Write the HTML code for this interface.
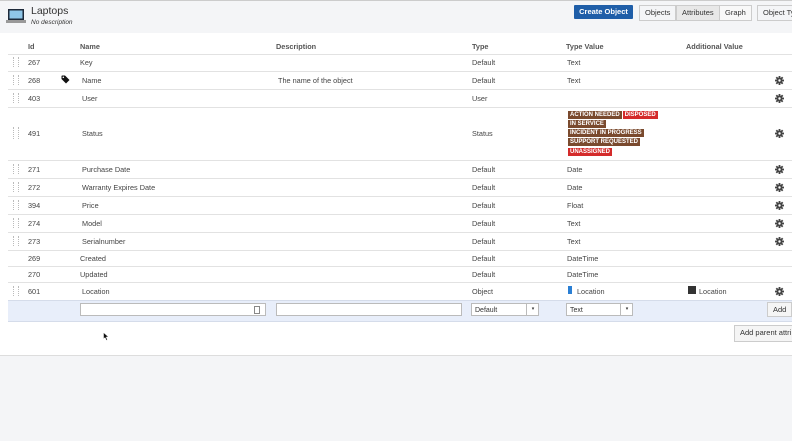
<!DOCTYPE html><html><head><style>
body{margin:0;width:792px;height:441px;overflow:hidden;background:#f4f5f7;font-family:"Liberation Sans",sans-serif;color:#333;position:relative}
.a{position:absolute;white-space:nowrap}
.hd{position:absolute;left:0;top:0;width:792px;height:32px;background:#f4f5f7;border-top:1px solid #ccc;border-bottom:1px solid #ccc}
.main{position:absolute;left:0;top:33px;width:792px;height:322px;background:#fff;border-bottom:1px solid #ddd}
.ln{position:absolute;left:8px;width:784px;height:1px;background:#e2e2e2}
.t{position:absolute;font-size:7.3px;color:#444;white-space:nowrap}
.th{position:absolute;font-size:7.3px;font-weight:bold;color:#555}
.dr{position:absolute;left:13px;width:4px;border-left:1px dotted #bbb;border-right:1px dotted #bbb}
.g{position:absolute;left:775px;width:9px;height:9px}
.lr{position:absolute;left:0;height:8px;white-space:nowrap}
.lz{display:inline-block;height:8px;font-size:6px;line-height:8.5px;font-weight:bold;color:#fff;padding:0 2px;margin-right:1px;vertical-align:top;overflow:hidden}
.br{background:#7a4a2e}.rd{background:#d42b2b}
.btn{position:absolute;font-size:7.5px;border:1px solid #ccc;background:#f4f5f7;height:14px;line-height:14px;padding:0 5px;color:#333}
.inp{position:absolute;height:13px;background:#fff;border:1px solid #bbb;font-size:7px;line-height:13px;padding-left:3px;box-sizing:border-box}
</style></head><body>
<svg width="0" height="0" style="position:absolute"><defs><g id="gear"><circle cx="4.5" cy="4.5" r="3" fill="#444"/><g stroke="#444" stroke-width="1.8"><line x1="4.5" y1="0" x2="4.5" y2="9"/><line x1="0" y1="4.5" x2="9" y2="4.5"/><line x1="1.3" y1="1.3" x2="7.7" y2="7.7"/><line x1="7.7" y1="1.3" x2="1.3" y2="7.7"/></g><circle cx="4.5" cy="4.5" r="1.2" fill="#fff"/></g></defs></svg>
<div class="hd"></div>
<svg class="a" style="left:6px;top:8px" width="20" height="16"><rect x="2" y="1" width="16" height="11" fill="#1e2a3a"/><rect x="3.5" y="2.5" width="13" height="8" fill="#8fc6e8"/><rect x="0" y="12" width="20" height="3" fill="#999"/></svg>
<div class="a" style="left:31px;top:5px;font-size:10.5px;color:#333">Laptops</div>
<div class="a" style="left:31px;top:19px;font-size:6.5px;font-style:italic;color:#333">No description</div>
<div class="a" style="left:574px;top:5px;width:59px;height:14px;background:#1f5ea8;color:#fff;font-size:7.5px;font-weight:bold;text-align:center;line-height:14px;border-radius:1px">Create Object</div>
<div class="btn" style="left:639px;top:5px">Objects</div>
<div class="btn" style="left:676px;top:5px;background:#e8e8e8">Attributes</div>
<div class="btn" style="left:719px;top:5px;background:#f8f8f8">Graph</div>
<div class="btn" style="left:757px;top:5px;width:40px">Object Ty</div>
<div class="main"></div>
<div class="th" style="left:28px;top:42px">Id</div><div class="th" style="left:80px;top:42px">Name</div><div class="th" style="left:276px;top:42px">Description</div><div class="th" style="left:472px;top:42px">Type</div><div class="th" style="left:566px;top:42px">Type Value</div><div class="th" style="left:686px;top:42px">Additional Value</div>
<div class="ln" style="top:54px"></div><div class="ln" style="top:71px"></div><div class="ln" style="top:89px"></div><div class="ln" style="top:107px"></div><div class="ln" style="top:160px"></div><div class="ln" style="top:178px"></div><div class="ln" style="top:196px"></div><div class="ln" style="top:214px"></div><div class="ln" style="top:232px"></div><div class="ln" style="top:250px"></div><div class="ln" style="top:266px"></div><div class="ln" style="top:282px"></div>
<div class="a" style="left:8px;top:300px;width:784px;height:20px;background:#e8eefa;border-top:1px solid #d5dcea;border-bottom:1px solid #d5dcea"></div>
<div class="dr" style="top:57px;height:10px"></div><div class="dr" style="top:75px;height:10px"></div><div class="dr" style="top:93px;height:10px"></div><div class="dr" style="top:127px;height:12px"></div><div class="dr" style="top:164px;height:10px"></div><div class="dr" style="top:182px;height:10px"></div><div class="dr" style="top:200px;height:10px"></div><div class="dr" style="top:218px;height:10px"></div><div class="dr" style="top:236px;height:10px"></div><div class="dr" style="top:286px;height:10px"></div>
<div class="t" style="left:28px;top:58px">267</div><div class="t" style="left:80px;top:58px">Key</div><div class="t" style="left:472px;top:58px">Default</div><div class="t" style="left:567px;top:58px">Text</div>
<div class="t" style="left:28px;top:76px">268</div>
<svg class="a" style="left:61px;top:75px" width="9" height="9"><path d="M0.5 1 L0.5 4 L5 8.5 L8.5 5 L4 0.5 L1 0.5Z" fill="#111"/><circle cx="2.3" cy="2.3" r="0.8" fill="#fff"/></svg>
<div class="t" style="left:82px;top:76px">Name</div><div class="t" style="left:278px;top:76px">The name of the object</div><div class="t" style="left:472px;top:76px">Default</div><div class="t" style="left:567px;top:76px">Text</div><svg class="g" style="top:76px"><use href="#gear"/></svg>
<div class="t" style="left:28px;top:94px">403</div><div class="t" style="left:82px;top:94px">User</div><div class="t" style="left:472px;top:94px">User</div><svg class="g" style="top:94px"><use href="#gear"/></svg>
<div class="t" style="left:28px;top:129px">491</div><div class="t" style="left:82px;top:129px">Status</div><div class="t" style="left:472px;top:129px">Status</div><svg class="g" style="top:129px"><use href="#gear"/></svg>
<div class="a" style="left:568px;top:111px;width:100px;height:48px">
<div class="lr" style="top:0"><span class="lz br">ACTION NEEDED</span><span class="lz rd">DISPOSED</span></div>
<div class="lr" style="top:9px"><span class="lz br">IN SERVICE</span></div>
<div class="lr" style="top:18px"><span class="lz br">INCIDENT IN PROGRESS</span></div>
<div class="lr" style="top:27px"><span class="lz br">SUPPORT REQUESTED</span></div>
<div class="lr" style="top:37px"><span class="lz rd">UNASSIGNED</span></div></div>
<div class="t" style="left:28px;top:165px">271</div><div class="t" style="left:82px;top:165px">Purchase Date</div><div class="t" style="left:472px;top:165px">Default</div><div class="t" style="left:567px;top:165px">Date</div><svg class="g" style="top:165px"><use href="#gear"/></svg>
<div class="t" style="left:28px;top:183px">272</div><div class="t" style="left:82px;top:183px">Warranty Expires Date</div><div class="t" style="left:472px;top:183px">Default</div><div class="t" style="left:567px;top:183px">Date</div><svg class="g" style="top:183px"><use href="#gear"/></svg>
<div class="t" style="left:28px;top:201px">394</div><div class="t" style="left:82px;top:201px">Price</div><div class="t" style="left:472px;top:201px">Default</div><div class="t" style="left:567px;top:201px">Float</div><svg class="g" style="top:201px"><use href="#gear"/></svg>
<div class="t" style="left:28px;top:219px">274</div><div class="t" style="left:82px;top:219px">Model</div><div class="t" style="left:472px;top:219px">Default</div><div class="t" style="left:567px;top:219px">Text</div><svg class="g" style="top:219px"><use href="#gear"/></svg>
<div class="t" style="left:28px;top:237px">273</div><div class="t" style="left:82px;top:237px">Serialnumber</div><div class="t" style="left:472px;top:237px">Default</div><div class="t" style="left:567px;top:237px">Text</div><svg class="g" style="top:237px"><use href="#gear"/></svg>
<div class="t" style="left:28px;top:254px">269</div><div class="t" style="left:80px;top:254px">Created</div><div class="t" style="left:472px;top:254px">Default</div><div class="t" style="left:567px;top:254px">DateTime</div>
<div class="t" style="left:28px;top:270px">270</div><div class="t" style="left:80px;top:270px">Updated</div><div class="t" style="left:472px;top:270px">Default</div><div class="t" style="left:567px;top:270px">DateTime</div>
<div class="t" style="left:28px;top:287px">601</div><div class="t" style="left:82px;top:287px">Location</div><div class="t" style="left:472px;top:287px">Object</div><div class="a" style="left:568px;top:286px;width:4px;height:8px;background:#2a7fd4"></div><div class="t" style="left:577px;top:287px">Location</div><div class="a" style="left:688px;top:286px;width:8px;height:8px;background:#333"></div><div class="t" style="left:699px;top:287px">Location</div><svg class="g" style="top:287px"><use href="#gear"/></svg>
<div class="inp" style="left:80px;top:303px;width:186px"></div><div class="a" style="left:254px;top:306px;width:4px;height:6px;border:1px solid #888"></div>
<div class="inp" style="left:276px;top:303px;width:186px"></div>
<div class="inp" style="left:471px;top:303px;width:68px">Default</div><div class="a" style="left:526px;top:303px;height:13px;border-left:1px solid #bbb;width:12px;text-align:center;font-size:5px;line-height:13px">▾</div>
<div class="inp" style="left:566px;top:303px;width:67px">Text</div><div class="a" style="left:620px;top:303px;height:13px;border-left:1px solid #bbb;width:12px;text-align:center;font-size:5px;line-height:13px">▾</div>
<div class="btn" style="left:767px;top:302px;height:13px;line-height:13px;background:#f5f5f5">Add</div>
<div class="btn" style="left:734px;top:325px;height:15px;background:#f5f5f5;width:60px">Add parent attri</div>
<svg class="a" style="left:103px;top:332px" width="6" height="9"><path d="M0.5 0.5 L0.5 7 L2 5.5 L3.5 8.5 L4.5 8 L3.2 5 L5.5 5Z" fill="#111" stroke="#fff" stroke-width="0.5"/></svg>
</body></html>
